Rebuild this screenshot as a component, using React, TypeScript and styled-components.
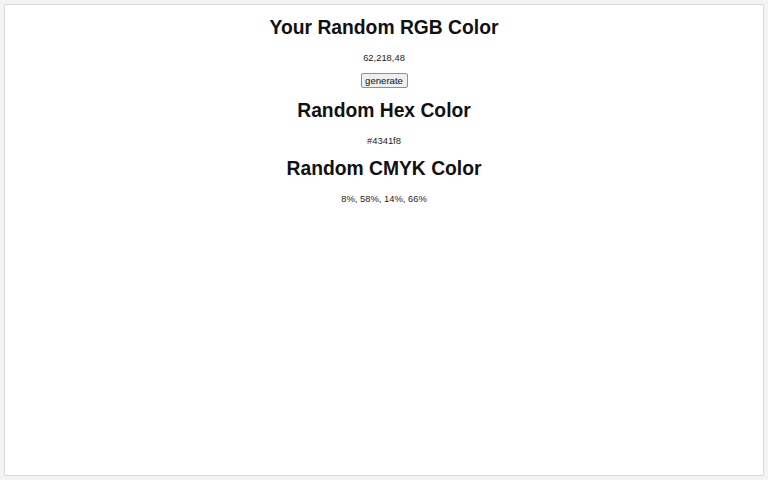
import React, {useState} from 'react';
import styled, {createGlobalStyle} from 'styled-components';

const GlobalStyle = createGlobalStyle`
  html, body {
    margin: 0;
    padding: 0;
    background: #f3f3f3;
  }
`;

type Rgb = [number, number, number];

const toHex = ([r, g, b]: Rgb) =>
    '#' + [r, g, b].map(v => v.toString(16).padStart(2, '0')).join('');

const App: React.FC = () => {
    const [rgb, setRgb] = useState<Rgb>([62, 218, 48]);
    const [hex] = useState<string>('#4341f8');
    const [cmyk] = useState<string>('8%, 58%, 14%, 66%');

    const generate = () => {
        const next: Rgb = [0, 0, 0].map(() => Math.floor(Math.random() * 256)) as Rgb;
        setRgb(next);
        console.log(toHex(next));
    };

    return (
        <Page>
            <GlobalStyle/>
            <Panel>
                <Title>Your Random RGB Color</Title>
                <Value>{rgb.join(',')}</Value>
                <GenerateButton onClick={generate}>generate</GenerateButton>
                <Title>Random Hex Color</Title>
                <Value>{hex}</Value>
                <Title>Random CMYK Color</Title>
                <Value $last>{cmyk}</Value>
            </Panel>
        </Page>
    );
};

const Page = styled.div`
  width: 768px;
  height: 480px;
  padding: 4px;
  box-sizing: border-box;
`;

const Panel = styled.div`
  height: 100%;
  box-sizing: border-box;
  background: #fff;
  border: 1px solid #dcdcdc;
  display: flex;
  flex-direction: column;
  align-items: center;
  padding-top: 12px;
  font-family: "Liberation Sans", Arial, sans-serif;
  color: #000;
`;

const Title = styled.h1`
  margin: 0 0 13px;
  font-size: 19.3px;
  font-weight: bold;
  line-height: 22px;
  color: #111;
`;

const Value = styled.p<{ $last?: boolean }>`
  margin: 0 0 ${p => (p.$last ? 0 : 11)}px;
  font-size: 9.4px;
  line-height: 12px;
  color: #222;
`;

const GenerateButton = styled.button`
  margin: -2px 0 12px;
  height: 15px;
  width: 47px;
  padding: 0;
  font-family: "Liberation Sans", Arial, sans-serif;
  font-size: 9.6px;
  line-height: 13px;
  color: #111;
  background: #efefef;
  border: 1px solid #8f8f8f;
  border-radius: 2px;
`;

export default App;
